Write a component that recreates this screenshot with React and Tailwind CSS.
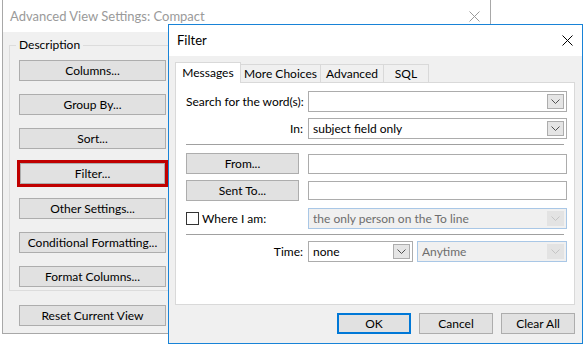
import React from 'react';

const font = { fontFamily: 'Lato, "Noto Sans", sans-serif' };

function Chevron({ dim }) {
  return (
    <svg width="9" height="6" viewBox="0 0 9 6">
      <path d="M0.5 0.5 L4.5 4.5 L8.5 0.5" fill="none" stroke={dim ? '#c4c4c4' : '#505050'} strokeWidth="1" />
    </svg>
  );
}

function Combo({ value, className = '', disabled }) {
  return (
    <div
      className={`flex h-[21px] items-center border pl-[4px] pr-[2px] ${
        disabled ? 'border-[#a9c7e6] bg-[#f0f0f0] text-[#6d6d6d]' : 'border-[#acacac] bg-white text-black'
      } ${className}`}
    >
      <span className="flex-1 truncate leading-[16px]">{value}</span>
      <div
        className={`flex h-[15px] w-[17px] shrink-0 items-center justify-center border ${
          disabled ? 'border-[#e3e3e3] bg-[#e3e3e3]' : 'border-[#adadad] bg-[#e5e5e5]'
        }`}
      >
        <Chevron dim={disabled} />
      </div>
    </div>
  );
}

function WinButton({ children, className = '' }) {
  return (
    <div
      className={`flex h-[21px] items-center justify-center whitespace-nowrap border border-[#adadad] bg-[#e1e1e1] leading-none text-black ${className}`}
    >
      {children}
    </div>
  );
}

function BackWindow() {
  const items = ['Columns...', 'Group By...', 'Sort...', 'Filter...', 'Other Settings...', 'Conditional Formatting...', 'Format Columns...'];
  return (
    <div className="absolute left-[2px] top-[-1px] flex h-[335px] w-[489px] flex-col border border-[#a8a8a8] bg-[#f0f0f0]">
      <div className="flex h-[32px] items-center justify-between bg-white pl-[7px] pr-[10px] text-[13px] text-[#9a9a9a]">
        <span className="leading-none">Advanced View Settings: Compact</span>
        <svg width="11" height="11" viewBox="0 0 11 11">
          <path d="M0.5 0.5 L10.5 10.5 M10.5 0.5 L0.5 10.5" stroke="#9a9a9a" strokeWidth="1" />
        </svg>
      </div>
      <div className="relative ml-[6px] mt-[13px] h-[246px] w-[470px] border border-[#dcdcdc] pl-[9px] pt-[14px]">
        <span className="absolute left-[6px] top-[-7px] bg-[#f0f0f0] px-[3px] leading-none">Description</span>
        <div className="flex flex-col gap-[13px]">
          {items.map((t) =>
            t === 'Filter...' ? (
              <div key={t} className="-my-[2px] -ml-[2px] w-[151px] border-[3px] border-[#c00000]">
                <WinButton className="h-[19px] w-full">{t}</WinButton>
              </div>
            ) : (
              <WinButton key={t} className="w-[147px]">
                {t}
              </WinButton>
            )
          )}
        </div>
      </div>
      <WinButton className="ml-[16px] mt-[14px] w-[147px]">Reset Current View</WinButton>
    </div>
  );
}

function Tab({ label, active, className = '' }) {
  return (
    <div
      className={`flex items-center justify-center border border-b-0 border-[#d9d9d9] leading-none ${
        active ? 'z-10 -mb-px h-[21px] bg-white' : 'h-[18px] bg-[#f0f0f0]'
      } ${className}`}
    >
      {label}
    </div>
  );
}

function FilterDialog() {
  return (
    <div className="absolute left-[168px] top-[24px] flex h-[320px] w-[415px] flex-col border border-[#1883d7] bg-[#f0f0f0]">
      <div className="flex h-[31px] items-center justify-between bg-white pl-[8px] pr-[9px] text-[13px] text-black">
        <span className="leading-none">Filter</span>
        <svg width="11" height="11" viewBox="0 0 11 11">
          <path d="M0.5 0.5 L10.5 10.5 M10.5 0.5 L0.5 10.5" stroke="#000" strokeWidth="1" />
        </svg>
      </div>
      <div className="ml-[6px] mt-[6px] flex items-end">
        <Tab label="Messages" active className="w-[66px]" />
        <Tab label="More Choices" className="w-[80px] border-l-0" />
        <Tab label="Advanced" className="w-[63px] border-l-0" />
        <Tab label="SQL" className="w-[45px] border-l-0" />
      </div>
      <div className="ml-[6px] h-[223px] w-[400px] border border-[#d9d9d9] bg-white pl-[10px] pr-[7px] pt-[8px]">
        <div className="flex items-center">
          <span className="w-[122px] whitespace-nowrap leading-none">Search for the word(s):</span>
          <Combo value="" className="w-[259px]" />
        </div>
        <div className="mt-[6px] flex items-center">
          <span className="w-[117px] text-right leading-none">In:</span>
          <Combo value="subject field only" className="ml-[5px] w-[259px]" />
        </div>
        <div className="mt-[5px] h-px w-[378px] bg-[#a0a0a0]" />
        <div className="mt-[8px] flex items-center">
          <WinButton className="h-[20px] w-[113px]">From...</WinButton>
          <div className="ml-[9px] h-[20px] w-[259px] border border-[#acacac] bg-white" />
        </div>
        <div className="mt-[6px] flex items-center">
          <WinButton className="h-[19px] w-[113px]">Sent To...</WinButton>
          <div className="ml-[9px] h-[19px] w-[259px] border border-[#acacac] bg-white" />
        </div>
        <div className="mt-[7px] flex items-center">
          <div className="h-[13px] w-[13px] border border-[#333333] bg-white" />
          <span className="ml-[3px] w-[106px] leading-none">Where I am:</span>
          <Combo value="the only person on the To line" disabled className="h-[20px] w-[259px]" />
        </div>
        <div className="mt-[5px] h-px w-[378px] bg-[#a0a0a0]" />
        <div className="mt-[6px] flex items-center">
          <span className="w-[117px] text-right leading-none">Time:</span>
          <Combo value="none" className="ml-[5px] w-[105px]" />
          <Combo value="Anytime" disabled className="ml-[4px] w-[150px]" />
        </div>
      </div>
      <div className="mt-[8px] flex justify-end gap-[8px] pr-[7px]">
        <div className="flex h-[21px] w-[74px] items-center justify-center border-[2px] border-[#0078d7] bg-[#e1e1e1] leading-none">
          OK
        </div>
        <WinButton className="w-[74px]">Cancel</WinButton>
        <WinButton className="w-[74px]">Clear All</WinButton>
      </div>
    </div>
  );
}

export default function App() {
  return (
    <div className="relative h-[350px] w-[587px] overflow-hidden bg-white text-[12px] text-black" style={font}>
      <BackWindow />
      <FilterDialog />
    </div>
  );
}
